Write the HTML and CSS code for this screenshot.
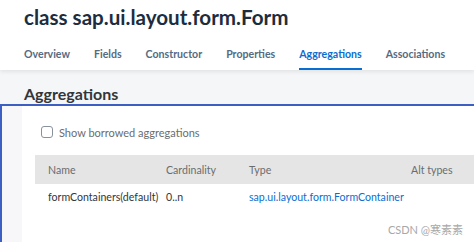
FILE: index.html
```html
<!DOCTYPE html>
<html lang="en">
<head>
<meta charset="UTF-8">
<title>class sap.ui.layout.form.Form</title>
<link rel="stylesheet" href="styles.css">
</head>
<body>
<div class="page">
  <header class="obj-header">
    <h1>class sap.ui.layout.form.Form</h1>
    <nav class="tabs">
      <span class="tab">Overview</span>
      <span class="tab">Fields</span>
      <span class="tab">Constructor</span>
      <span class="tab">Properties</span>
      <span class="tab active">Aggregations</span>
      <span class="tab">Associations</span>
    </nav>
  </header>
  <section class="section">
    <h2>Aggregations</h2>
    <div class="panel">
      <div class="panel-inner">
        <label class="check">
          <span class="box"></span>
          Show borrowed aggregations
        </label>
        <div class="table">
          <div class="row head">
            <span class="c-name">Name</span>
            <span class="c-card">Cardinality</span>
            <span class="c-type">Type</span>
            <span class="c-alt">Alt types</span>
          </div>
          <div class="row">
            <span class="c-name">formContainers(default)</span>
            <span class="c-card">0..n</span>
            <span class="c-type"><a href="#">sap.ui.layout.form.FormContainer</a></span>
            <span class="c-alt"></span>
          </div>
          <div class="watermark">CSDN @寒素素</div>
        </div>
      </div>
    </div>
  </section>
</div>
</body>
</html>
```

FILE: styles.css
```css
body {
  margin: 0;
  background: #f5f6f7;
  font-family: Lato, 'Noto Sans', Arial, 'Noto Sans CJK SC', sans-serif;
  color: #32363a;
}
.page {
  width: 474px;
  height: 242px;
  overflow: hidden;
}
.obj-header {
  background: #fff;
  padding: 0 24px;
  height: 70px;
  box-shadow: 0 2px 4px rgba(0,0,0,0.08);
  position: relative;
  z-index: 1;
}
.obj-header h1 {
  margin: 0;
  padding-top: 5px;
  font-size: 20.6px;
  line-height: 24px;
  font-weight: 700;
  color: #1d2d3e;
}
.tabs {
  display: flex;
  gap: 24px;
  margin-top: 17px;
}
.tab {
  font-size: 10.6px;
  font-weight: 700;
  color: #556b82;
  line-height: 16px;
  padding-bottom: 6px;
  border-bottom: 2px solid transparent;
}
.tab.active {
  color: #0a6ed1;
  border-bottom-color: #0a6ed1;
}
.section h2 {
  margin: 0;
  padding: 14px 24px 0;
  font-size: 16px;
  line-height: 20px;
  font-weight: 700;
  color: #32363a;
  height: 20px;
}
.panel {
  border-top: 2px solid #3d5fc4;
  border-left: 2px solid #3d5fc4;
  background: #f7f7f9;
  padding-left: 20px;
}
.panel-inner {
  background: #fff;
  padding: 18px 0 0 13px;
  height: 200px;
}
.check {
  display: flex;
  align-items: center;
  gap: 6px;
  padding-left: 6px;
  font-size: 11px;
  color: #6a6d70;
  height: 16px;
}
.box {
  width: 10px;
  height: 10px;
  border: 1px solid #89919a;
  border-radius: 3px;
  background: #fff;
}
.table {
  margin-top: 15px;
  position: relative;
}
.row {
  display: flex;
  font-size: 10.6px;
  color: #32363a;
  padding: 0 13px;
}
.row.head {
  background: #e5e5e5;
  color: #6a6d70;
  height: 29px;
  align-items: center;
}
.row:not(.head) {
  padding-top: 6px;
  line-height: 14px;
}
.c-name { width: 118px; }
.c-card { width: 83px; }
.c-type { flex: 1; }
.c-alt { width: 50px; }
.c-type a {
  color: #0a6ed1;
  text-decoration: none;
}
.watermark {
  position: absolute;
  right: 11px;
  top: 66px;
  font-size: 11px;
  color: #a8a8a8;
}
```
